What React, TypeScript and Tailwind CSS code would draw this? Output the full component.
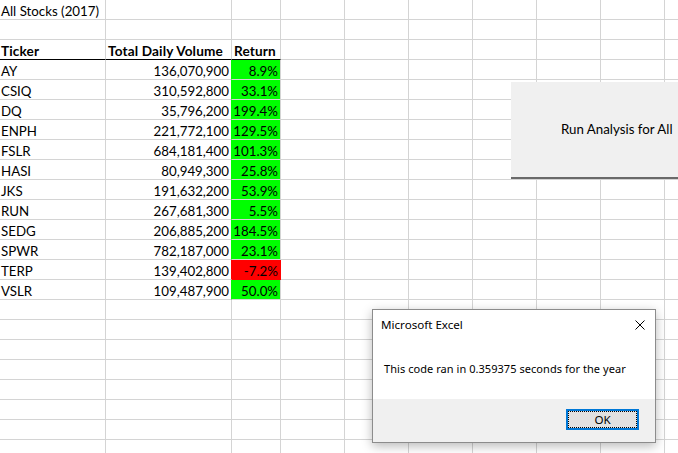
type Stock = [string, string, string]

const stocks: Stock[] = [
  ['AY', '136,070,900', '8.9%'],
  ['CSIQ', '310,592,800', '33.1%'],
  ['DQ', '35,796,200', '199.4%'],
  ['ENPH', '221,772,100', '129.5%'],
  ['FSLR', '684,181,400', '101.3%'],
  ['HASI', '80,949,300', '25.8%'],
  ['JKS', '191,632,200', '53.9%'],
  ['RUN', '267,681,300', '5.5%'],
  ['SEDG', '206,885,200', '184.5%'],
  ['SPWR', '782,187,000', '23.1%'],
  ['TERP', '139,402,800', '-7.2%'],
  ['VSLR', '109,487,900', '50.0%'],
]

const emptyCols = [0, 1, 2, 3, 4, 5, 6]
const cell = 'h-5 border-r border-b border-[#d4d4d4] flex items-end overflow-visible whitespace-nowrap leading-[16px]'

function Filler() {
  return (
    <>
      {emptyCols.map((c) => (
        <div key={c} className={cell} />
      ))}
    </>
  )
}

function EmptyRow() {
  return (
    <>
      <div className={cell} />
      <div className={cell} />
      <div className={cell} />
      <Filler />
    </>
  )
}

export default function App() {
  return (
    <div className="relative w-[678px] h-[453px] overflow-hidden bg-white text-black font-['Lato',sans-serif] text-[13.3px]">
      <div className="grid grid-cols-[106px_126px_49px_repeat(7,64px)] w-max">
        {/* row 1 */}
        <div className={`${cell} pl-px`}>All Stocks (2017)</div>
        <div className={cell} />
        <div className={cell} />
        <Filler />

        <EmptyRow />

        {/* header */}
        <div className={`${cell} pl-px font-bold text-[13.6px] tracking-[0.15px] border-b-black`}>Ticker</div>
        <div className={`${cell} pl-[2px] font-bold text-[13.6px] tracking-[0.15px] border-b-black`}>
          Total Daily Volume
        </div>
        <div className={`${cell} pl-[2px] font-bold text-[13.6px] tracking-[0.15px] border-b-black`}>Return</div>
        <Filler />

        {stocks.map(([ticker, volume, ret]) => {
          const negative = ret.startsWith('-')
          return (
            <div key={ticker} className="contents">
              <div className={`${cell} pl-px`}>{ticker}</div>
              <div
                className={`${cell} justify-end pr-[2px] ${negative ? 'border-r-[#ff0000]' : 'border-r-[#00ff00]'}`}
              >
                {volume}
              </div>
              <div
                className={`${cell} justify-end pr-[2px] ${
                  negative ? 'bg-[#ff0000] border-[#ff0000]' : 'bg-[#00ff00] border-[#00ff00]'
                }`}
              >
                {ret}
              </div>
              <Filler />
            </div>
          )
        })}

        {[0, 1, 2, 3, 4, 5, 6, 7].map((r) => (
          <div key={r} className="contents">
            <EmptyRow />
          </div>
        ))}
      </div>

      {/* form button */}
      <div className="absolute left-[511px] top-[82px] w-[260px] h-[97px] bg-[#f0f0f0] border-b-2 border-[#6a6a6a] flex items-center pl-[50px] whitespace-nowrap">
        Run Analysis for All
      </div>

      {/* message box */}
      <div className="absolute left-[372px] top-[309px] w-[284px] h-[134px] bg-white border border-[#8c8c8c] shadow-[0_3px_10px_rgba(0,0,0,0.28)] flex flex-col font-['Noto_Sans',sans-serif] text-[11px]">
        <div className="h-[29px] flex items-center justify-between pl-[8px] pr-[10px]">
          <span className="text-[11.6px]">Microsoft Excel</span>
          <svg width="10" height="10" viewBox="0 0 10 10" className="text-black">
            <path d="M0.5 0.5 L9.5 9.5 M9.5 0.5 L0.5 9.5" stroke="currentColor" strokeWidth="1" fill="none" />
          </svg>
        </div>
        <div className="h-[60px] flex items-center pl-[11px] tracking-[0.05px]">
          This code ran in 0.359375 seconds for the year
        </div>
        <div className="flex-1 bg-[#f0f0f0] flex justify-end items-start pt-[10px] pr-[16px]">
          <button
            type="button"
            className="relative w-[73px] h-[21px] bg-[#e1e1e1] border-2 border-[#0078d7] flex items-center justify-center text-[11.6px]"
          >
            <span className="absolute inset-0 border border-dotted border-black" />
            OK
          </button>
        </div>
      </div>
    </div>
  )
}
